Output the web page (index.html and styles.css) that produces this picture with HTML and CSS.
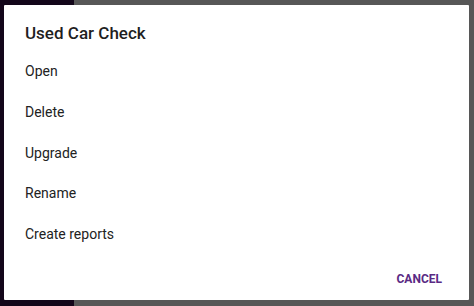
FILE: index.html
```html
<!DOCTYPE html>
<html>
<head>
<meta charset="utf-8">
<link rel="stylesheet" href="styles.css">
</head>
<body>
<div class="dialog">
  <h2 class="title">Used Car Check</h2>
  <ul class="items">
    <li>Open</li>
    <li>Delete</li>
    <li>Upgrade</li>
    <li>Rename</li>
    <li>Create reports</li>
  </ul>
  <div class="actions">
    <button class="btn">CANCEL</button>
  </div>
</div>
</body>
</html>
```
FILE: styles.css
```css
html, body {
  margin: 0;
  padding: 0;
  height: 100%;
}
body {
  background: linear-gradient(to right, #13061a 0, #13061a 74px, #575757 74px, #575757 100%);
  font-family: Roboto, "Liberation Sans", sans-serif;
  padding: 5px 5px 6px 4px;
  box-sizing: border-box;
}
.dialog {
  background: #ffffff;
  height: 295px;
  box-sizing: border-box;
  padding: 17px 0 3px 0;
  display: flex;
  flex-direction: column;
  border-radius: 1px;
}
.title {
  margin: 0;
  padding: 0 21px;
  font-size: 17px;
  font-weight: 500;
  line-height: 22px;
  color: #1f1f1f;
}
.items {
  list-style: none;
  margin: 7px 0 0 0;
  padding: 0;
}
.items li {
  padding: 0 21px;
  font-size: 14px;
  line-height: 40.8px;
  color: #222222;
}
.actions {
  margin-top: auto;
  display: flex;
  justify-content: flex-end;
  padding: 0 19px 0 0;
}
.btn {
  background: none;
  border: none;
  font-family: Roboto, "Liberation Sans", sans-serif;
  font-size: 12px;
  font-weight: 700;
  color: #5a2a84;
  line-height: 36px;
  padding: 0 8px;
}
```
